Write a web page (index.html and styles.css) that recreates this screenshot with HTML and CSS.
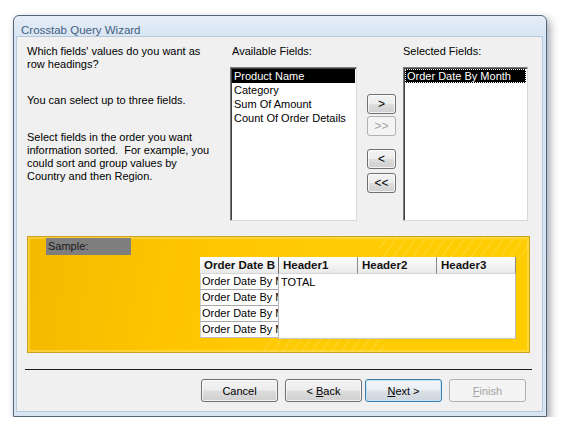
FILE: index.html
```html
<!DOCTYPE html>
<html>
<head>
<meta charset="utf-8">
<link rel="stylesheet" href="styles.css">
</head>
<body>
<div class="window">
  <div class="titlebar">Crosstab Query Wizard</div>
  <div class="client">
    <div class="top">
      <div class="intro">
        <p>Which fields' values do you want as<br>row headings?</p>
        <p>You can select up to three fields.</p>
        <p>Select fields in the order you want<br>information sorted.&nbsp; For example, you<br>could sort and group values by<br>Country and then Region.</p>
      </div>
      <div class="field-col avail">
        <div class="label">Available Fields:</div>
        <div class="listbox">
          <div class="item selected">Product Name</div>
          <div class="item">Category</div>
          <div class="item">Sum Of Amount</div>
          <div class="item">Count Of Order Details</div>
        </div>
      </div>
      <div class="movers">
        <div class="group">
          <button class="btn small">&gt;</button>
          <button class="btn small disabled">&gt;&gt;</button>
        </div>
        <div class="group lower">
          <button class="btn small">&lt;</button>
          <button class="btn small">&lt;&lt;</button>
        </div>
      </div>
      <div class="field-col chosen">
        <div class="label">Selected Fields:</div>
        <div class="listbox">
          <div class="item selected focus">Order Date By Month</div>
        </div>
      </div>
    </div>

    <div class="sample">
      <div class="sample-label">Sample:</div>
      <div class="grid">
        <div class="rowcol">
          <div class="hcell">Order Date B</div>
          <div class="dcell">Order Date By M</div>
          <div class="dcell">Order Date By M</div>
          <div class="dcell">Order Date By M</div>
          <div class="dcell last">Order Date By M</div>
        </div>
        <div class="valcols">
          <div class="hrow">
            <div class="hcell">Header1</div>
            <div class="hcell">Header2</div>
            <div class="hcell">Header3</div>
          </div>
          <div class="body">TOTAL</div>
        </div>
      </div>
    </div>

    <div class="sep"></div>

    <div class="footer">
      <button class="btn wide">Cancel</button>
      <button class="btn wide">&lt; <u>B</u>ack</button>
      <button class="btn wide default"><u>N</u>ext &gt;</button>
      <button class="btn wide disabled"><u>F</u>inish</button>
    </div>
  </div>
</div>
</body>
</html>
```

FILE: styles.css
```css
* { box-sizing: border-box; }

html, body {
  margin: 0;
  padding: 0;
  background: #ffffff;
}

body {
  font-family: "Liberation Sans", Arial, sans-serif;
  font-size: 11px;
  color: #000;
}

.window {
  margin: 15px 0 0 13px;
  width: 534px;
  height: 402px;
  border: 1px solid #54667e;
  border-radius: 6px 6px 0 0;
  padding: 0 4px 5px 3px;
  background: linear-gradient(#e6eef8 0, #d7e4f3 21px, #d9e5f3 100%);
  box-shadow: 3px 4px 9px rgba(40, 50, 70, 0.45);
  display: flex;
  flex-direction: column;
}

.titlebar {
  height: 21px;
  padding: 7px 0 0 4px;
  line-height: 14px;
  font-size: 11.5px;
  color: #45607f;
  white-space: nowrap;
}

.client {
  flex: 1;
  background: #f0f0f0;
  box-shadow: 0 0 0 1px #b9c9dc;
}

.top {
  display: flex;
  padding: 8px 0 0 10px;
  height: 184px;
}

.intro {
  width: 203px;
}

.intro p {
  margin: 0 0 23px 0;
  line-height: 13px;
  white-space: nowrap;
}

.intro p:nth-child(2) { margin-bottom: 24px; }

.field-col .label {
  line-height: 13px;
  height: 13px;
  margin-bottom: 9px;
  padding-left: 2px;
}

.avail { width: 127px; }
.chosen { width: 125px; margin-left: 7px; }
.chosen .label { padding-left: 0; }

.listbox {
  height: 154px;
  background: #fff;
  border-top: 1px solid #7a7a7a;
  border-left: 1px solid #7a7a7a;
  border-right: 1px solid #d8d8d8;
  border-bottom: 1px solid #d8d8d8;
  box-shadow: inset 1px 1px 0 #404040;
  padding: 1px 1px 0 1px;
}

.item {
  height: 14px;
  line-height: 14px;
  padding-left: 2px;
  white-space: nowrap;
  overflow: hidden;
}

.item.selected {
  background: #000;
  color: #fff;
}

.item.focus {
  outline: 1px dotted #ffffff;
  outline-offset: -1px;
}

.movers {
  width: 29px;
  margin-left: 10px;
  padding-top: 49px;
  display: flex;
  flex-direction: column;
}

.group {
  display: flex;
  flex-direction: column;
  gap: 2px;
}

.group.lower {
  margin-top: 13px;
  gap: 4px;
}

.btn {
  font-family: "Liberation Sans", Arial, sans-serif;
  font-size: 11px;
  color: #000;
  border: 1px solid #707070;
  border-radius: 3px;
  background: linear-gradient(#f3f3f3 0%, #ececec 48%, #dddddd 52%, #cfcfcf 100%);
  box-shadow: inset 0 0 0 1px rgba(255, 255, 255, 0.75);
  padding: 0;
  margin: 0;
  text-align: center;
}

.btn u { text-decoration: underline; text-underline-offset: 1px; }

.btn.small {
  width: 29px;
  height: 20px;
  line-height: 17px;
  font-size: 12px;
}

.btn.disabled {
  border-color: #adb2b5;
  background: #f4f4f4;
  color: #a3a3a3;
  box-shadow: none;
}

.sample {
  margin: 15px 0 0 10px;
  width: 503px;
  height: 117px;
  border: 1px solid #caa21c;
  padding: 1px 0 0 18px;
  background-color: #ffcb00;
  background-image:
    repeating-linear-gradient(125deg, rgba(255,255,255,0) 0 6px, rgba(255,238,160,0.16) 6px 8px),
    repeating-linear-gradient(125deg, rgba(255,255,255,0) 0 6px, rgba(255,238,160,0.14) 6px 8px),
    linear-gradient(100deg, #f3b900 0%, #fec500 30%, #ffcc04 60%, #ffcc00 100%);
  background-size: 150px 22px, 120px 14px, 100% 100%;
  background-position: right top, 62% bottom, 0 0;
  background-repeat: no-repeat;
  box-shadow: inset 0 0 0 2px rgba(255, 225, 110, 0.5);
}

.sample-label {
  width: 85px;
  height: 17px;
  line-height: 17px;
  background: #7f7f7f;
  color: #1a1a1a;
  padding-left: 2px;
}

.grid {
  display: flex;
  margin: 2px 0 0 154px;
  width: 316px;
}

.rowcol {
  width: 79px;
  border-right: 1px solid #b9b9b9;
}

.hcell {
  height: 17px;
  line-height: 17px;
  font-weight: bold;
  font-size: 11.5px;
  color: #111;
  padding-left: 4px;
  white-space: nowrap;
  overflow: hidden;
  background: linear-gradient(#ffffff 0%, #f4f4f4 50%, #e9e9e9 100%);
  border-right: 1px solid #8a8a8a;
  border-bottom: 1px solid #d5d5d5;
}

.rowcol .hcell {
  width: 79px;
  border-right: 1px solid #6f6f6f;
}

.dcell {
  height: 16px;
  line-height: 15px;
  padding-left: 1px;
  background: #fff;
  border-bottom: 1px solid #a8a8a8;
  border-left: 1px solid #cfcfcf;
  white-space: nowrap;
  overflow: hidden;
}

.dcell.last { border-bottom: 1px solid #bdbdbd; }

.valcols {
  width: 237px;
  display: flex;
  flex-direction: column;
}

.hrow {
  display: flex;
}

.hrow .hcell {
  width: 79px;
}

.body {
  height: 65px;
  background: #fff;
  padding: 1px 0 0 2px;
  line-height: 14px;
  border-right: 1px solid #b9b9b9;
  border-bottom: 1px solid #c8c8c8;
}

.sep {
  margin: 16px 0 0 8px;
  width: 507px;
  border-top: 1px solid #1c1c1c;
}

.footer {
  display: flex;
  margin-top: 9px;
  padding-left: 184px;
}

.btn.wide {
  width: 77px;
  height: 23px;
  line-height: 20px;
}

.footer .btn + .btn { margin-left: 7px; }
.footer .btn.default { margin-left: 3px; }

.btn.default {
  border-color: #3c7fb1;
  background: linear-gradient(#f2f6f9 0%, #e9eef2 48%, #d9e0e6 52%, #cdd5dc 100%);
  box-shadow: inset 0 0 0 1px #c4e5f6;
}
```
